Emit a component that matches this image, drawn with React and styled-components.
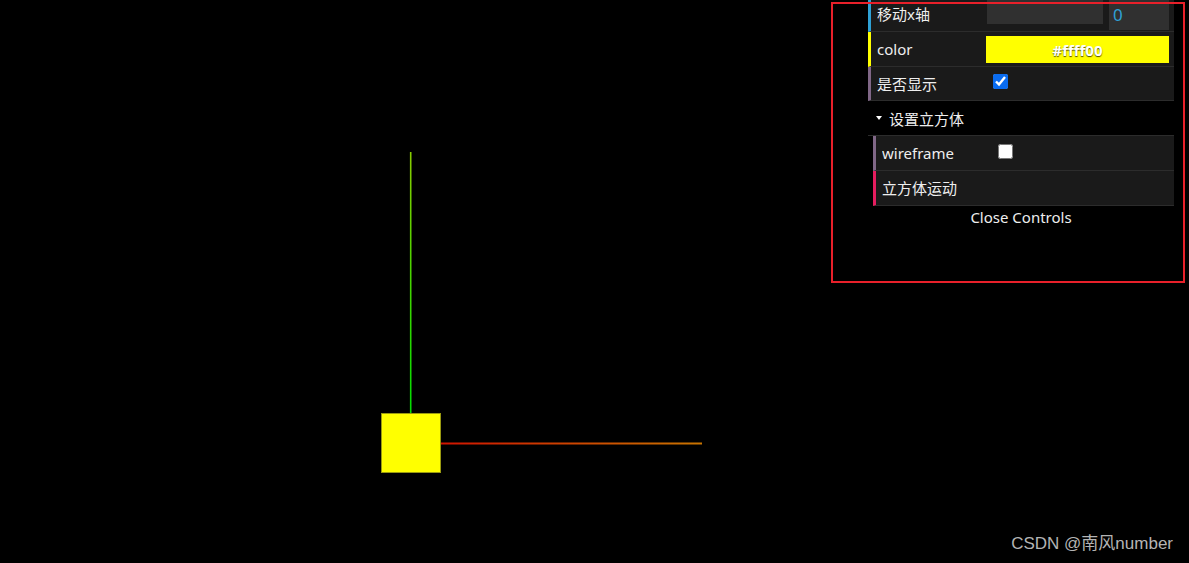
import React from 'react';
import styled, { createGlobalStyle } from 'styled-components';

const GlobalStyle = createGlobalStyle`
  html, body {
    margin: 0;
    padding: 0;
    background: #000000;
    overflow: hidden;
  }
`;

const Stage = styled.div`
  position: relative;
  width: 1189px;
  height: 563px;
  background: #000000;
  font-family: 'Noto Sans', 'Noto Sans CJK SC', sans-serif;
`;

const Scene = styled.svg`
  display: block;
`;

const GuiPanel = styled.div`
  position: absolute;
  top: -3px;
  left: 868px;
  width: 306px;
  color: #eeeeee;
  font-size: 15px;
`;

const List = styled.ul`
  list-style: none;
  margin: 0 0 0 ${(p) => (p.$nested ? '5px' : '0')};
  padding: 0;
`;

const Row = styled.li`
  box-sizing: content-box;
  height: 33.8px;
  display: grid;
  grid-template-columns: 112px 1fr;
  align-items: center;
  padding: 0 5px 0 6px;
  background: #1a1a1a;
  border-left: 3px solid ${(p) => p.$accent};
  border-bottom: 1px solid #2c2c2c;
`;

const Label = styled.span`
  white-space: nowrap;
  overflow: hidden;
`;

const NumberControl = styled.div`
  display: flex;
  align-items: center;
  gap: 6px;
  margin-left: -2px;
`;

const SliderTrack = styled.div`
  flex: 1;
  height: 24px;
  margin-top: -3px;
  background: #303030;
`;

const NumberInput = styled.input`
  box-sizing: border-box;
  width: 60px;
  height: 31px;
  margin-top: 1px;
  padding: 0 4px;
  border: none;
  outline: none;
  background: #303030;
  color: #2fa1d6;
  font-family: inherit;
  font-size: 17px;
`;

const ColorField = styled.div`
  height: 27px;
  margin-left: -3px;
  margin-top: 2px;
  display: flex;
  align-items: center;
  justify-content: center;
  background: ${(p) => p.$value};
  color: #ffffff;
  font-weight: 700;
  font-size: 15px;
  text-shadow: rgba(0, 0, 0, 0.7) 0 1px 1px;
`;

const Check = styled.input.attrs({ type: 'checkbox' })`
  width: 15px;
  height: 15px;
  margin: 0 0 0 4px;
  accent-color: #0a6cf0;
`;

const FolderTitle = styled.div`
  box-sizing: content-box;
  height: 33.8px;
  display: flex;
  align-items: center;
  gap: 7px;
  padding-left: 8px;
  background: #000000;
  border-bottom: 1px solid #2c2c2c;
`;

const Caret = styled.span`
  width: 0;
  height: 0;
  border-left: 3px solid transparent;
  border-right: 3px solid transparent;
  border-top: 4px solid #ffffff;
`;

const CloseButton = styled.div`
  height: 23px;
  line-height: 22px;
  text-align: center;
  background: #000000;
  color: #eeeeee;
`;

const Annotation = styled.div`
  position: absolute;
  left: 831px;
  top: 2px;
  width: 350px;
  height: 277px;
  border: 2px solid #e8202a;
  pointer-events: none;
`;

const Watermark = styled.div`
  position: absolute;
  right: 16px;
  bottom: 9px;
  font-family: 'Liberation Sans', 'Noto Sans CJK SC', sans-serif;
  font-size: 17px;
  color: #b4b4b4;
`;

const AxesScene = () => (
  <Scene width="1189" height="563" viewBox="0 0 1189 563">
    <defs>
      <linearGradient id="axisY" x1="0" y1="413" x2="0" y2="152" gradientUnits="userSpaceOnUse">
        <stop offset="0" stopColor="#00dd00" />
        <stop offset="1" stopColor="#88cc00" />
      </linearGradient>
      <linearGradient id="axisX" x1="441" y1="0" x2="702" y2="0" gradientUnits="userSpaceOnUse">
        <stop offset="0" stopColor="#d01400" />
        <stop offset="1" stopColor="#c87400" />
      </linearGradient>
    </defs>
    <line x1="410.7" y1="443" x2="410.7" y2="152" stroke="url(#axisY)" strokeWidth="1.6" />
    <line x1="411" y1="443.5" x2="702" y2="443.5" stroke="url(#axisX)" strokeWidth="1.8" />
    <rect x="381.5" y="413.5" width="59" height="59" fill="#ffff00" stroke="#9a9a10" strokeWidth="1" />
  </Scene>
);

export default function App() {
  return (
    <>
      <GlobalStyle />
      <Stage>
        <AxesScene />
        <GuiPanel>
          <List>
            <Row $accent="#2fa1d6">
              <Label>移动x轴</Label>
              <NumberControl>
                <SliderTrack />
                <NumberInput readOnly defaultValue="0" />
              </NumberControl>
            </Row>
            <Row $accent="#ffff00">
              <Label>color</Label>
              <ColorField $value="#ffff00">#ffff00</ColorField>
            </Row>
            <Row $accent="#806787">
              <Label>是否显示</Label>
              <div>
                <Check defaultChecked />
              </div>
            </Row>
            <li>
              <FolderTitle>
                <Caret />
                <span>设置立方体</span>
              </FolderTitle>
              <List $nested>
                <Row $accent="#806787">
                  <Label>wireframe</Label>
                  <div>
                    <Check />
                  </div>
                </Row>
                <Row $accent="#e61d5f">
                  <Label>立方体运动</Label>
                </Row>
              </List>
            </li>
          </List>
          <CloseButton>Close Controls</CloseButton>
        </GuiPanel>
        <Annotation />
        <Watermark>CSDN @南风number</Watermark>
      </Stage>
    </>
  );
}
